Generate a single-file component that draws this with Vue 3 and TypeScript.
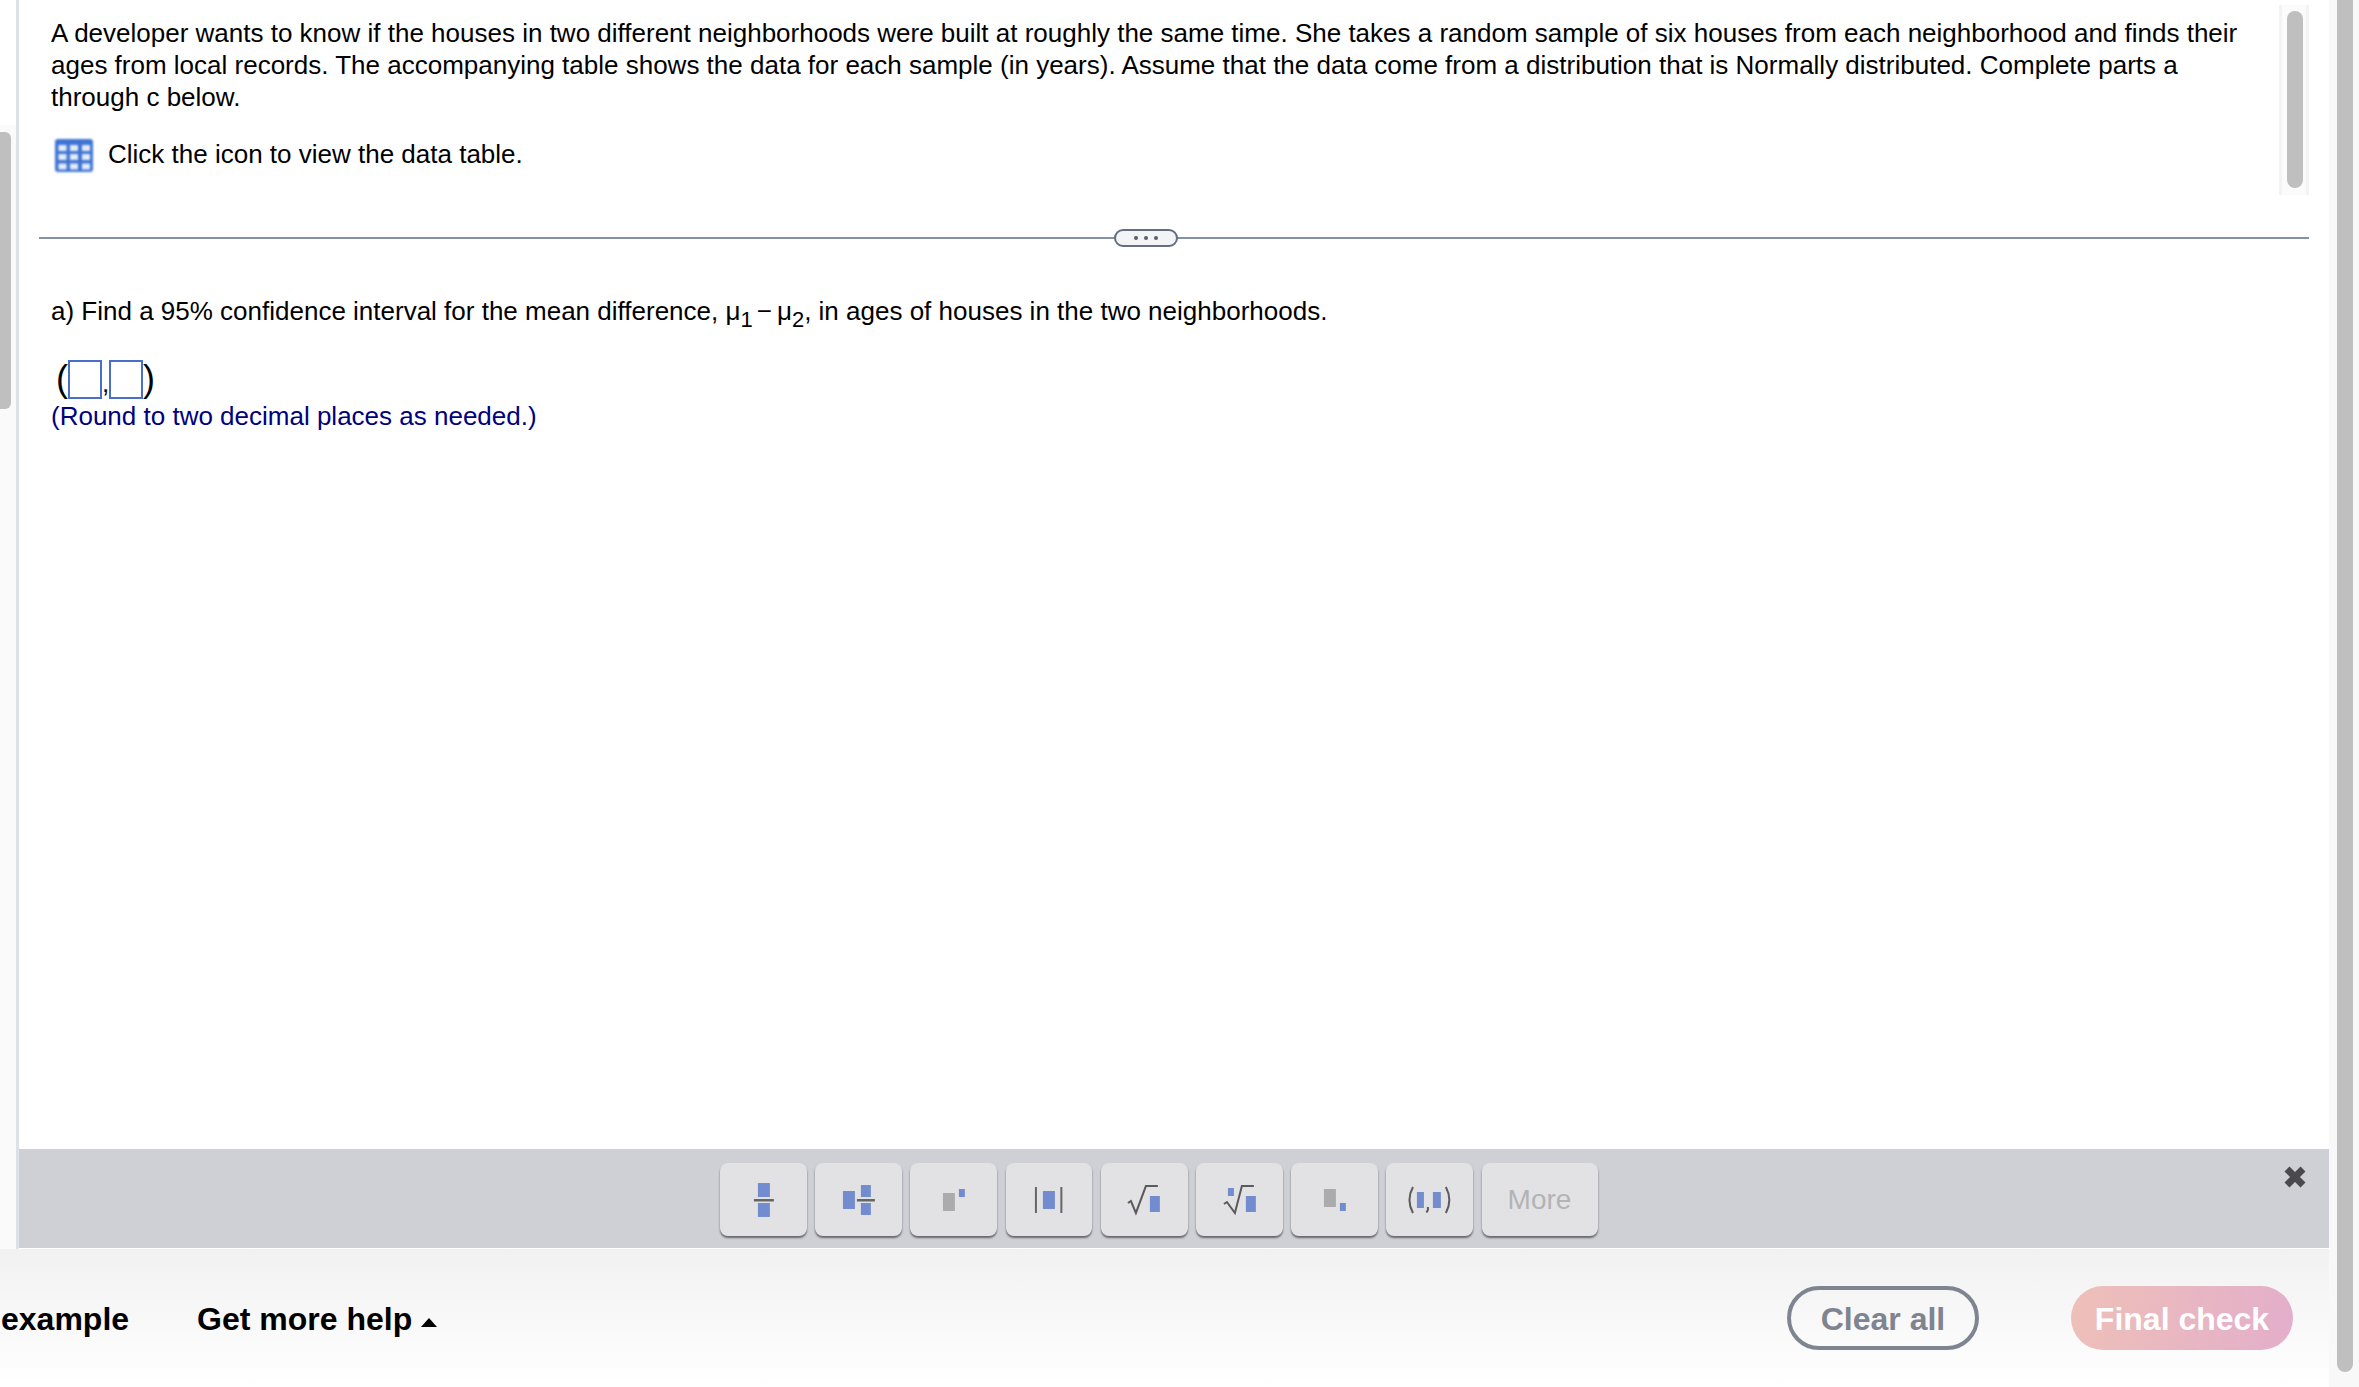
<script setup lang="ts">
const tableRows = [6, 15, 24.5]
const tableCols = [3.5, 15, 27]
</script>

<template>
  <div class="page">
    <div class="page__content">
      <main class="main">
        <aside class="rail">
          <div class="rail__track">
            <div class="rail__thumb"></div>
          </div>
        </aside>

        <section class="panel">
          <div class="panel__scroll">
            <div class="question">
              <p class="question__text">
                A developer wants to know if the houses in two different neighborhoods were built at roughly the same time. She takes a random sample of six houses from each neighborhood and finds their ages from local records. The accompanying table shows the data for each sample (in years). Assume that the data come from a distribution that is Normally distributed. Complete parts a through c below.
              </p>
              <div class="question__data">
                <svg class="table-icon" width="38" height="33" viewBox="0 0 38 33">
                  <rect width="38" height="33" rx="3" fill="#3f74d2" />
                  <template v-for="y in tableRows" :key="y">
                    <rect v-for="x in tableCols" :key="x" :x="x" :y="y" width="8" height="6" fill="#e4ecfa" />
                  </template>
                </svg>
                <span>Click the icon to view the data table.</span>
              </div>
              <div class="inner-scroll">
                <div class="inner-scroll__thumb"></div>
              </div>
            </div>

            <div class="divider">
              <div class="divider__pill">
                <i></i><i></i><i></i>
              </div>
            </div>

            <div class="part">
              <p class="part__text">
                a) Find a 95% confidence interval for the mean difference, <span class="math">μ<sub>1</sub><span class="math__minus">−</span>μ<sub>2</sub></span>, in ages of houses in the two neighborhoods.
              </p>
              <div class="answer">
                <span class="answer__paren">(</span>
                <span class="answer__box"></span>
                <span class="answer__comma">,</span>
                <span class="answer__box"></span>
                <span class="answer__paren">)</span>
              </div>
              <p class="part__hint">(Round to two decimal places as needed.)</p>
            </div>
          </div>

          <div class="toolbar">
            <button class="tool">
              <svg viewBox="0 0 87 73">
                <rect x="38" y="20" width="12" height="14" class="b" />
                <rect x="34" y="36" width="20" height="2.5" class="l" />
                <rect x="38" y="40" width="12" height="14" class="b" />
              </svg>
            </button>
            <button class="tool">
              <svg viewBox="0 0 87 73">
                <rect x="28" y="28" width="12" height="18" class="b" />
                <rect x="46" y="22" width="10" height="12" class="b" />
                <rect x="42" y="36" width="18" height="2.5" class="l" />
                <rect x="46" y="40" width="10" height="12" class="b" />
              </svg>
            </button>
            <button class="tool">
              <svg viewBox="0 0 87 73">
                <rect x="33" y="30" width="12" height="18" class="g" />
                <rect x="49" y="26" width="6" height="8" class="b" />
              </svg>
            </button>
            <button class="tool">
              <svg viewBox="0 0 87 73">
                <rect x="29" y="24" width="2" height="26" class="l" />
                <rect x="37" y="28" width="12" height="18" class="b" />
                <rect x="54.5" y="24" width="2" height="26" class="l" />
              </svg>
            </button>
            <button class="tool">
              <svg viewBox="0 0 87 73">
                <path d="M27 40l3-2 5 12 10-27h12" class="s" />
                <rect x="49" y="33" width="10" height="16" class="b" />
              </svg>
            </button>
            <button class="tool">
              <svg viewBox="0 0 87 73">
                <rect x="32" y="25" width="6" height="8" class="b" />
                <path d="M28 41l3-2 8 11 7-27h12" class="s" />
                <rect x="50" y="33" width="10" height="16" class="b" />
              </svg>
            </button>
            <button class="tool">
              <svg viewBox="0 0 87 73">
                <rect x="33" y="26" width="12" height="18" class="g" />
                <rect x="49" y="40" width="6" height="8" class="b" />
              </svg>
            </button>
            <button class="tool">
              <svg viewBox="0 0 87 73">
                <path d="M27 24Q20 37 27 50" class="s" />
                <rect x="31" y="29" width="7" height="16" class="b" />
                <path d="M42 44v3l-1.500 2.500" class="s" />
                <rect x="47" y="29" width="8" height="16" class="b" />
                <path d="M60 24Q67 37 60 50" class="s" />
              </svg>
            </button>
            <button class="tool tool--more">More</button>

            <svg class="toolbar__close" width="24" height="24" viewBox="0 0 24 24">
              <path d="M4 4L20 20M20 4L4 20" stroke="#4a4a4a" stroke-width="7" fill="none" />
            </svg>
          </div>
        </section>
      </main>

      <footer class="footer">
        <span class="footer__link">example</span>
        <span class="footer__link footer__help">Get more help<i class="footer__caret"></i></span>
        <button class="btn btn--clear">Clear all</button>
        <button class="btn btn--check">Final check</button>
      </footer>
    </div>

    <aside class="page-bar">
      <div class="page-bar__thumb"></div>
    </aside>
  </div>
</template>

<style>
html, body { margin: 0; background: #fff; }
</style>

<style scoped>
.page {
  display: flex;
  width: 2359px;
  height: 1387px;
  overflow: hidden;
  font-family: 'Liberation Sans', Arial, sans-serif;
  color: #000;
}
.page__content { width: 2329px; display: flex; flex-direction: column; }
.main { display: flex; height: 1249px; }

.rail {
  width: 16px;
  flex: none;
  border-right: 3px solid #dfe1e8;
  padding-top: 125px;
}
.rail__track { height: 1124px; background: #fafafa; padding-top: 7px; box-sizing: border-box; }
.rail__thumb { width: 11px; height: 277px; background: #bfbfbf; border-radius: 0 6px 6px 0; }

.panel { flex: 1; display: flex; flex-direction: column; min-width: 0; }
.panel__scroll { flex: 1; min-height: 0; }

.question { position: relative; height: 237px; padding: 17px 0 0 32px; box-sizing: border-box; font-size: 26px; line-height: 32px; }
.question__text { margin: 0; width: 2210px; }
.question__data { display: flex; align-items: center; margin-top: 25px; height: 32px; }
.table-icon { margin: 2px 15px 0 4px; flex: none; filter: blur(0.8px); }

.inner-scroll {
  position: absolute;
  top: 5px;
  right: 20px;
  width: 30px;
  height: 190px;
  padding: 6px 6px 0 8px;
  box-sizing: border-box;
  background: linear-gradient(90deg, #f3f3f3 0 3px, #fbfbfb 3px 27px, #f3f3f3 27px);
}
.inner-scroll__thumb { height: 177px; background: #bfbfbf; border-radius: 8px; }

.divider { position: relative; height: 2px; margin: 0 20px 0 20px; background: #8592a3; }
.divider__pill {
  position: absolute;
  left: 1075px;
  top: -8px;
  width: 64px;
  height: 18px;
  box-sizing: border-box;
  border: 2px solid #636f7f;
  border-radius: 9px;
  background: #f3f4f6;
  display: flex;
  align-items: center;
  justify-content: center;
  gap: 6px;
}
.divider__pill i { width: 4px; height: 4px; border-radius: 50%; background: #555f6e; }

.part { padding: 56px 0 0 32px; font-size: 26px; line-height: 32px; }
.part__text { margin: 0; }
.math { font-size: 26px; }
.math sub { font-size: 22px; line-height: 0; vertical-align: -7px; }
.math__minus { margin: 0 5px 0 4px; }
.answer { display: flex; height: 40px; margin-top: 32px; padding-left: 5px; align-items: flex-end; }
.answer__paren { font-size: 36px; line-height: 40px; width: 12px; font-weight: 400; }
.answer__box { width: 34px; height: 39px; box-sizing: border-box; border: 2px solid #4a6fc9; background: #fff; }
.answer__comma { width: 7px; font-size: 26px; line-height: 32px; }
.part__hint { margin: 1px 0 0; color: #000080; }

.toolbar {
  position: relative;
  flex: none;
  height: 100px;
  box-sizing: border-box;
  border-bottom: 1px solid #fff;
  background: #cfd0d6;
  display: flex;
  align-items: flex-start;
  gap: 8.4px;
  padding: 14px 0 0 701px;
}
.tool {
  width: 86.8px;
  height: 73px;
  flex: none;
  padding: 0;
  border: 0;
  border-radius: 8px;
  background: #e2e2e5;
  box-shadow: 0 2px 2px rgba(0, 0, 0, 0.5);
  font-family: inherit;
}
.tool svg { display: block; width: 100%; height: 100%; }
.tool .b { fill: #728ccf; }
.tool .g { fill: #ababab; }
.tool .l { fill: #666; }
.tool .s { fill: none; stroke: #5a5a5a; stroke-width: 2; }
.tool--more { width: 116px; font-size: 28px; color: #b3b3b5; }
.toolbar__close { position: absolute; top: 16px; right: 22px; }

.footer {
  flex: 1;
  display: flex;
  align-items: center;
  padding: 0 36px 0 1px;
  background: linear-gradient(#f1f1f2, #fff);
}
.footer__link { font-size: 32px; font-weight: 700; color: #000; padding-top: 3px; }
.footer__help { margin-left: 68px; display: flex; align-items: center; }
.footer__caret {
  margin: 6px 0 0 9px;
  width: 0;
  height: 0;
  border-left: 8px solid transparent;
  border-right: 8px solid transparent;
  border-bottom: 9px solid #000;
}
.btn {
  height: 64px;
  border-radius: 32px;
  font-family: inherit;
  font-size: 32px;
  font-weight: 700;
  padding: 2px 0 0;
  box-sizing: border-box;
}
.btn--clear {
  width: 192px;
  margin-left: auto;
  border: 4px solid #7f8491;
  color: #7f8491;
  background: transparent;
}
.btn--check {
  width: 222px;
  margin-left: 92px;
  border: 0;
  color: #fff;
  background: linear-gradient(100deg, #eec0b8, #e3aecb);
}

.page-bar { flex: 1; background: #f8f8f8; padding-left: 8px; }
.page-bar__thumb { width: 16px; height: 1372px; background: #bfbfbf; border-radius: 0 0 8px 8px; }
</style>
